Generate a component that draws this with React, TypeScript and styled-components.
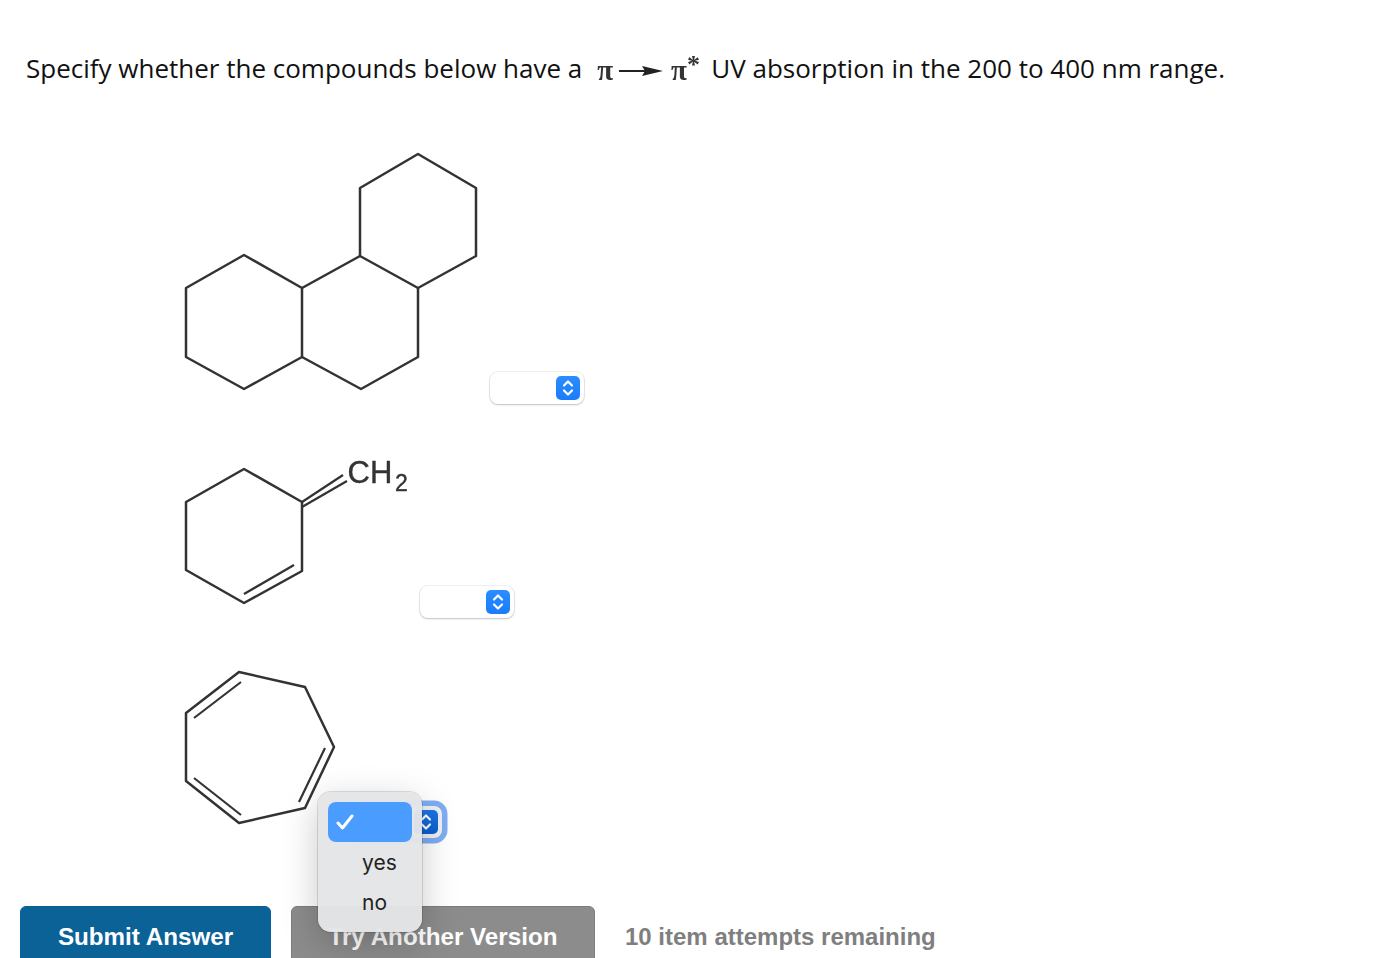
import styled, { createGlobalStyle } from "styled-components";

const GlobalStyle = createGlobalStyle`
  html, body {
    margin: 0;
    height: 958px;
    overflow: hidden;
    background: #fff;
  }
`;

const Page = styled.div`
  height: 958px;
  overflow: hidden;
  padding: 50px 0 0 26px;
  box-sizing: border-box;
  font-family: "Open Sans", sans-serif;
  color: #111;
`;
const Question = styled.div`
  display: flex;
  align-items: center;
  height: 36px;
  font-size: 26px;
  white-space: nowrap;
`;
const Formula = styled.span`
  display: inline-flex;
  align-items: center;
  width: 104px;
  margin: 5px 10px 0 15px;
  filter: blur(0.6px);
  color: #333;
  font-family: "Liberation Serif", serif;
  font-size: 29px;
  font-weight: 700;
`;
const Arrow = styled.svg`
  flex: none;
  margin: 0 8px 0 6px;
`;
const Star = styled.span`
  font-size: 26px;
  line-height: 0;
  position: relative;
  top: -6px;
`;
const Compounds = styled.div`
  display: flex;
  flex-direction: column;
  margin: 54px 0 0 144px;
`;
const Row = styled.div<{ $top: number }>`
  display: flex;
  align-items: flex-end;
  margin-top: ${(p) => p.$top}px;
`;
const Molecule = styled.svg`
  display: block;
  flex: none;
  filter: blur(0.4px);
  fill: none;
  stroke: #333;
  stroke-width: 2.5;
  stroke-linejoin: round;
`;
const Bond = styled.polyline`
  stroke-width: 2.2;
`;
const Label = styled.text`
  font-family: "Liberation Sans", sans-serif;
  fill: #333;
  stroke: #333;
  stroke-width: 0.4;
`;
const SelectBox = styled.div<{ $focused?: boolean }>`
  position: relative;
  flex: none;
  width: ${(p) => (p.$focused ? "92px" : "94px")};
  height: 32px;
  box-sizing: border-box;
  display: flex;
  align-items: center;
  justify-content: flex-end;
  padding-right: 4px;
  background: ${(p) => (p.$focused ? "#eef0f3" : "#fff")};
  border-radius: 8px;
  box-shadow: ${(p) =>
    p.$focused
      ? "0 0 0 5.5px #7fadf3"
      : "0 0 0 1px rgba(0, 0, 0, 0.06), 0 1px 2px rgba(0, 0, 0, 0.2)"};
`;
const Stepper = styled.span<{ $focused?: boolean }>`
  display: flex;
  align-items: center;
  justify-content: center;
  width: 24px;
  height: 24px;
  border-radius: 5px;
  background: ${(p) =>
    p.$focused
      ? "linear-gradient(#1d74e4, #0a5fd0)"
      : "linear-gradient(#2b8dff, #1a7cfa)"};
`;
const Popup = styled.div`
  position: absolute;
  left: -32px;
  top: -14px;
  width: 104px;
  height: 140px;
  box-sizing: border-box;
  padding: 10px;
  background: rgba(228, 229, 231, 0.97);
  border-radius: 13px;
  box-shadow: 0 0 0 1px rgba(0, 0, 0, 0.12), 0 10px 36px rgba(0, 0, 0, 0.22);
  font-family: Inter, sans-serif;
  font-size: 21px;
  color: #222;
  z-index: 2;
`;
const Option = styled.div<{ $selected?: boolean }>`
  display: flex;
  align-items: center;
  height: 40px;
  padding-left: ${(p) => (p.$selected ? "8px" : "34px")};
  border-radius: 8px;
  background: ${(p) => (p.$selected ? "#4a9cff" : "transparent")};
`;
const Actions = styled.div`
  display: flex;
  align-items: flex-start;
  margin: 68px 0 0 -6px;
`;
const ActionButton = styled.button<{ $muted?: boolean }>`
  width: ${(p) => (p.$muted ? "304px" : "251px")};
  height: 62px;
  margin-right: ${(p) => (p.$muted ? "30px" : "20px")};
  border: ${(p) => (p.$muted ? "1px solid #7d7d7d" : "1px solid #0b6297")};
  border-radius: 6px;
  background: ${(p) => (p.$muted ? "#8c8c8c" : "#0b6297")};
  color: #fff;
  font-family: "Liberation Sans", sans-serif;
  font-size: 24.2px;
  font-weight: 700;
  padding: 0;
`;
const Attempts = styled.span`
  line-height: 62px;
  color: #7f7f7f;
  font-family: "Liberation Sans", sans-serif;
  font-size: 24px;
  font-weight: 700;
`;

function StepperIcon() {
  return (
    <svg width="12" height="18" viewBox="0 0 12 18" fill="none" stroke="#fff" strokeWidth="2.2" strokeLinecap="round" strokeLinejoin="round">
      <path d="M2 6.5 6 2.5 10 6.5" />
      <path d="M2 11.5 6 15.5 10 11.5" />
    </svg>
  );
}

function Select({ open }: { open?: boolean }) {
  return (
    <SelectBox $focused={open}>
      <Stepper $focused={open}>
        <StepperIcon />
      </Stepper>
      {open && (
        <Popup>
          <Option $selected>
            <svg width="18" height="16" viewBox="0 0 18 16" fill="none" stroke="#fff" strokeWidth="3" strokeLinecap="round" strokeLinejoin="round">
              <path d="M2 9 6.5 14 16 2" />
            </svg>
          </Option>
          <Option>yes</Option>
          <Option>no</Option>
        </Popup>
      )}
    </SelectBox>
  );
}

export default function App() {
  return (
    <Page>
      <GlobalStyle />
      <Question>
        Specify whether the compounds below have a
        <Formula>
          π
          <Arrow width="44" height="12" viewBox="0 0 44 12">
            <path d="M0 6H30" stroke="#222" strokeWidth="2" />
            <path d="M44 6 23 1 26 6 23 11Z" fill="#222" />
          </Arrow>
          π<Star>*</Star>
        </Formula>
        UV absorption in the 200 to 400 nm range.
      </Question>
      <Compounds>
        <Row $top={0}>
          <Molecule width="320" height="264" viewBox="170 140 320 264">
            <polygon points="418,154 476,188 476,256 418,288 360,256 360,188" />
            <polygon points="244,255 302,288 302,357 244,389 186,357 186,288" />
            <polyline points="302,288 360,256" />
            <polyline points="418,288 418,357 361,389 302,357" />
          </Molecule>
          <Select />
        </Row>
        <Row $top={36}>
          <Molecule width="250" height="178" viewBox="170 440 250 178">
            <polygon points="244,469 302,502 302,571 244,603 186,570 186,502" />
            <Bond points="244,594 294,565" />
            <Bond points="302,502 343,475" />
            <Bond points="302,507 347,481" />
            <Label x="347.5" y="483" fontSize="31">CH</Label>
            <Label x="395" y="491" fontSize="23">2</Label>
          </Molecule>
          <Select />
        </Row>
        <Row $top={42}>
          <Molecule width="180" height="178" viewBox="170 660 180 178">
            <polygon points="239,672 305,687 334,747 305,808 239,823 186,781 186,713" />
            <Bond points="241,682 194,718" />
            <Bond points="325,748 299,802" />
            <Bond points="194,778 241,815" />
          </Molecule>
          <Select open />
        </Row>
      </Compounds>
      <Actions>
        <ActionButton>Submit Answer</ActionButton>
        <ActionButton $muted>Try Another Version</ActionButton>
        <Attempts>10 item attempts remaining</Attempts>
      </Actions>
    </Page>
  );
}
